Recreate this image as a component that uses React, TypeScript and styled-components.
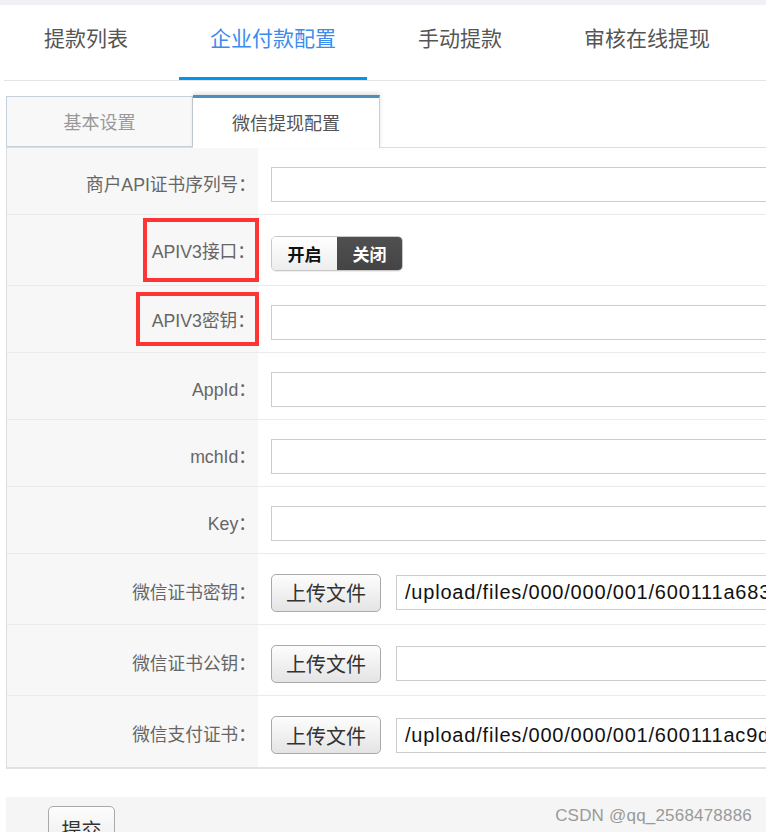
import { FC } from "react";
import styled, { createGlobalStyle } from "styled-components";

const GlobalStyle = createGlobalStyle`
  html, body {
    margin: 0;
    padding: 0;
    background: #ffffff;
    font-family: "Liberation Sans", "Noto Sans CJK SC", sans-serif;
  }
  * {
    box-sizing: border-box;
  }
`;

const mainTabs = ["提款列表", "企业付款配置", "手动提款", "审核在线提现"];

type Field =
  | { kind: "input"; label: string; mark?: "narrow" | "wide"; value?: string }
  | { kind: "toggle"; label: string; mark?: "narrow" | "wide" }
  | { kind: "upload"; label: string; value: string };

const fields: Field[] = [
  { kind: "input", label: "商户API证书序列号" },
  { kind: "toggle", label: "APIV3接口", mark: "narrow" },
  { kind: "input", label: "APIV3密钥", mark: "wide" },
  { kind: "input", label: "AppId" },
  { kind: "input", label: "mchId" },
  { kind: "input", label: "Key" },
  { kind: "upload", label: "微信证书密钥", value: "/upload/files/000/000/001/600111a683c2e.pem" },
  { kind: "upload", label: "微信证书公钥", value: "" },
  { kind: "upload", label: "微信支付证书", value: "/upload/files/000/000/001/600111ac9d7f1.p12" },
];

const App: FC = () => {
  return (
    <Page>
      <GlobalStyle />
      <TopStrip />
      <MainTabs>
        {mainTabs.map((t, i) => (
          <MainTab key={t} $active={i === 1}>
            {t}
          </MainTab>
        ))}
      </MainTabs>

      <Content>
        <SubTabs>
          <SubTab>基本设置</SubTab>
          <SubTab $active>微信提现配置</SubTab>
        </SubTabs>

        <FormTable>
          {fields.map((f) => (
            <Row key={f.label} $tall={f.kind !== "input"}>
              <LabelCell $marked={"mark" in f && !!f.mark}>
                {"mark" in f && f.mark ? (
                  <Mark $wide={f.mark === "wide"}>{f.label}：</Mark>
                ) : (
                  <span>{f.label}：</span>
                )}
              </LabelCell>
              <FieldCell>
                {f.kind === "input" && <TextInput readOnly value={f.value ?? ""} />}
                {f.kind === "toggle" && (
                  <Toggle>
                    <ToggleHalf>开启</ToggleHalf>
                    <ToggleHalf $on>关闭</ToggleHalf>
                  </Toggle>
                )}
                {f.kind === "upload" && (
                  <>
                    <UploadButton>上传文件</UploadButton>
                    <PathInput readOnly value={f.value} />
                  </>
                )}
              </FieldCell>
            </Row>
          ))}
        </FormTable>

        <ActionBar>
          <SubmitButton>提交</SubmitButton>
          <Watermark>CSDN @qq_2568478886</Watermark>
        </ActionBar>
      </Content>
    </Page>
  );
};

export default App;

const Page = styled.div`
  width: 766px;
  height: 832px;
  overflow: hidden;
  background: #ffffff;
`;

const TopStrip = styled.div`
  height: 5px;
  background: #f0f1f5;
`;

const MainTabs = styled.div`
  display: flex;
  gap: 20px;
  margin-left: 4px;
  padding-left: 9px;
  border-bottom: 1px solid #e4e4e4;
`;

const MainTab = styled.div<{ $active?: boolean }>`
  height: 75px;
  padding: 0 31px 8px;
  display: flex;
  align-items: center;
  font-family: "Noto Sans CJK SC", sans-serif;
  font-size: 21px;
  color: ${(p) => (p.$active ? "#3b8cec" : "#555555")};
  border-bottom: 3px solid ${(p) => (p.$active ? "#0096f0" : "transparent")};
`;

const Content = styled.div`
  margin-left: 6px;
  padding-top: 15px;
`;

const SubTabs = styled.div`
  display: flex;
  align-items: flex-end;
  height: 52px;
  border-bottom: 1px solid #dddddd;
`;

const SubTab = styled.div<{ $active?: boolean }>`
  width: 187px;
  height: ${(p) => (p.$active ? "53px" : "51px")};
  margin-bottom: ${(p) => (p.$active ? "-1px" : "0")};
  display: flex;
  align-items: center;
  justify-content: center;
  padding-bottom: 2px;
  font-family: "Noto Sans CJK SC", sans-serif;
  font-size: 18px;
  color: ${(p) => (p.$active ? "#555555" : "#999999")};
  background: ${(p) => (p.$active ? "#ffffff" : "#f8f8f8")};
  border: 1px solid #c5d0dc;
  border-bottom: ${(p) => (p.$active ? "none" : "1px solid #c5d0dc")};
  border-top: ${(p) => (p.$active ? "3px solid #4c8fbd" : "1px solid #c5d0dc")};
  border-left: ${(p) => (p.$active ? "none" : "1px solid #c5d0dc")};
  box-shadow: ${(p) => (p.$active ? "0 -2px 4px rgba(0, 0, 0, 0.12)" : "none")};
`;

const FormTable = styled.div`
  border-left: 1px solid #dddddd;
  border-bottom: 2px solid #e2e2e2;
`;

const Row = styled.div<{ $tall?: boolean }>`
  display: grid;
  grid-template-columns: 251px 1fr;
  height: ${(p) => (p.$tall ? "71px" : "67px")};
  border-bottom: 1px solid #ebebeb;
  &:last-child {
    border-bottom: none;
  }
`;

const LabelCell = styled.div<{ $marked?: boolean }>`
  display: flex;
  align-items: center;
  justify-content: flex-end;
  padding-right: ${(p) => (p.$marked ? "0" : "2px")};
  padding-top: 3px;
  background: #f7f7f7;
  font-family: "Liberation Sans", "Noto Sans CJK SC", sans-serif;
  font-size: 17.7px;
  color: #666666;
  white-space: nowrap;
`;

const Mark = styled.span<{ $wide?: boolean }>`
  border: 4px solid #ff3535;
  padding: ${(p) => (p.$wide ? "10px 0 10px 12px" : "15px 0 15px 5px")};
  margin-right: -1px;
  margin-top: -3px;
`;

const FieldCell = styled.div`
  display: flex;
  align-items: center;
  gap: 15px;
  padding-left: 13px;
  padding-top: 7px;
  overflow: hidden;
`;

const TextInput = styled.input`
  flex: none;
  width: 560px;
  height: 35px;
  border: 1px solid #cccccc;
  background: #ffffff;
  outline: none;
`;

const Toggle = styled.div`
  display: flex;
  width: 132px;
  height: 35px;
  border: 1px solid #c8c8c8;
  border-radius: 5px;
  overflow: hidden;
  box-shadow: 0 1px 1px rgba(0, 0, 0, 0.08);
`;

const ToggleHalf = styled.div<{ $on?: boolean }>`
  flex: 1;
  display: flex;
  align-items: center;
  justify-content: center;
  font-family: "Noto Sans CJK SC", sans-serif;
  font-weight: 700;
  font-size: 17px;
  color: ${(p) => (p.$on ? "#ffffff" : "#111111")};
  background: ${(p) =>
    p.$on
      ? "linear-gradient(#505050, #444444)"
      : "linear-gradient(#ffffff, #ededed)"};
`;

const UploadButton = styled.button`
  flex: none;
  width: 110px;
  height: 38px;
  border: 1px solid #a9a9a9;
  border-radius: 5px;
  background: linear-gradient(#fdfdfd, #e4e4e4);
  font-family: "Noto Sans CJK SC", sans-serif;
  font-size: 20px;
  color: #333333;
  padding: 0;
`;

const PathInput = styled.input`
  flex: none;
  width: 420px;
  height: 35px;
  border: 1px solid #cccccc;
  padding: 0 0 0 8px;
  font-family: "Liberation Sans", sans-serif;
  font-size: 20px;
  letter-spacing: 0.8px;
  color: #111111;
  outline: none;
`;

const ActionBar = styled.div`
  display: flex;
  justify-content: space-between;
  align-items: flex-start;
  margin-top: 28px;
  height: 60px;
  padding: 9px 14px 0 42px;
  background: #f5f5f5;
`;

const SubmitButton = styled.button`
  width: 67px;
  height: 42px;
  border: 1px solid #a9a9a9;
  border-radius: 5px;
  background: linear-gradient(#fdfdfd, #ececec);
  font-family: "Noto Sans CJK SC", sans-serif;
  font-size: 20px;
  color: #333333;
  padding: 4px 0 0;
`;

const Watermark = styled.span`
  margin-top: 0;
  font-family: "Liberation Sans", sans-serif;
  font-size: 17px;
  color: #9a9a9a;
  letter-spacing: 0.2px;
`;
